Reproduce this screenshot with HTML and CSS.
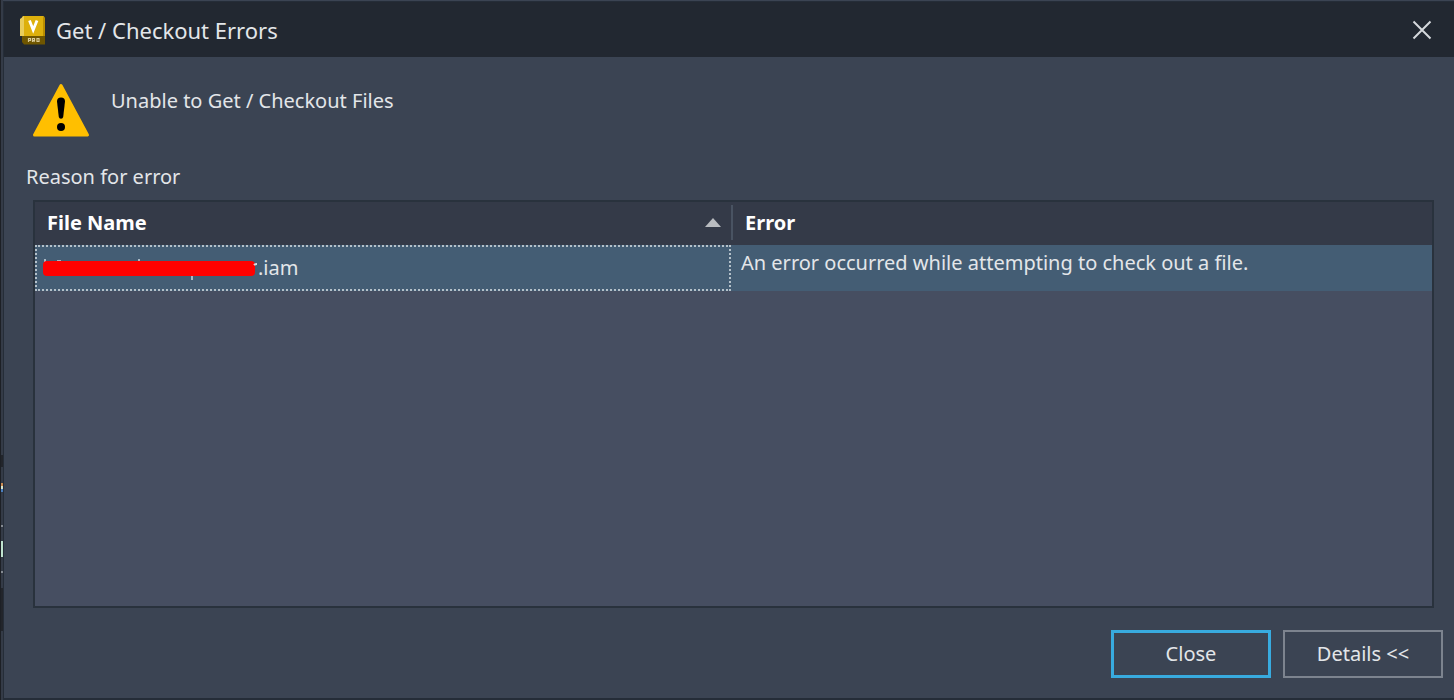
FILE: index.html
```html
<!DOCTYPE html>
<html lang="en">
<head>
<meta charset="utf-8">
<title>Get / Checkout Errors</title>
<link rel="stylesheet" href="styles.css">
</head>
<body>
<div class="backdrop" aria-hidden="true">
  <svg width="3" height="260" viewBox="0 0 3 260">
    <path fill="#22252b" d="M0 15h3v12H0zM0 148h3v43H0z"/>
    <path fill="#c98a52" d="M0 43h2v3H0z"/><path fill="#d9e6cf" d="M0 46h2v3H0z"/><path fill="#4a7fc0" d="M0 49h2v3H0z"/>
    <path fill="#858b92" d="M0 85h2v2H0zM0 131h2v2H0z"/>
    <path fill="#bfe3cf" d="M0 101h2v16H0z"/>
  </svg>
</div>
<main class="dialog">
  <header class="titlebar">
    <svg class="app-icon" width="28" height="32" viewBox="0 0 28 32" aria-hidden="true">
      <path fill="#6f5600" d="M3 20h23v10.500H5L3 28z"/>
      <path fill="#ddb00c" d="M4 2h20q1.500 0 1.500 1.500V22H3V3z"/>
      <path fill="#e9cd5c" d="M1 5l4-3v20H1z"/>
      <path fill="#b98d00" d="M24 3l2 1v18h-2z"/>
      <path fill="none" stroke="#fff" stroke-width="2.800" d="M10.500 6.500l3.700 9.500L18 6.500"/>
      <path fill="none" stroke="#d8ca98" stroke-width="1.200" d="M9.500 28v-3.500h2v2h-2M13.500 28v-3.500h2v2h-2m1 0l1 1.500M18 24.500h2V27.500h-2z"/>
    </svg>
    <h1 class="title">Get / Checkout Errors</h1>
    <button class="dismiss" type="button" aria-label="Dismiss">
      <svg width="20" height="20" viewBox="0 0 20 20" aria-hidden="true"><path fill="none" stroke="#d6d9dc" stroke-width="2" d="M1.500 1.500l17 17M18.500 1.500l-17 17"/></svg>
    </button>
  </header>
  <section class="message">
    <svg class="warning" width="58" height="54" viewBox="0 0 58 54" aria-hidden="true">
      <path fill="#ffbf00" stroke="#ffbf00" stroke-width="3" stroke-linejoin="round" d="M29 2.500L55.500 52H2.500z"/>
      <path d="M25 18.500q0-4 4-4t4 4l-1.800 15.500q-.3 1.800-2.200 1.800t-2.200-1.800z"/>
      <circle cx="29" cy="44" r="4"/>
    </svg>
    <p class="message-text">Unable to Get / Checkout Files</p>
  </section>
  <h2 class="caption" id="reason">Reason for error</h2>
  <div class="grid">
    <table class="errors" aria-labelledby="reason">
      <colgroup><col class="name-column"><col></colgroup>
      <thead>
        <tr>
          <th scope="col"><div class="heading">File Name
            <svg width="16" height="9" viewBox="0 0 16 9" aria-hidden="true"><path fill="#b9bcc0" d="M8 0l8 9H0z"/></svg></div></th>
          <th scope="col"><div class="heading">Error</div></th>
        </tr>
      </thead>
      <tbody>
        <tr>
          <td class="focused"><div class="file">
            <svg width="215" height="28" viewBox="0 0 215 28" aria-hidden="true">
              <path fill="none" stroke="#a9b8c4" stroke-width="2" d="M2 5v5M14 7h4M96 5v5M149 20v6"/>
              <rect y="7" width="212" height="15" rx="4" fill="#f00"/>
              <path fill="none" stroke="#d5dce2" stroke-width="2" d="M211 11q1-1 3-1"/>
            </svg><span>.iam</span></div></td>
          <td class="reason">An error occurred while attempting to check out a file.</td>
        </tr>
      </tbody>
    </table>
  </div>
  <footer class="actions">
    <button class="action primary" type="button">Close</button>
    <button class="action" type="button">Details &lt;&lt;</button>
  </footer>
</main>
</body>
</html>
```
FILE: styles.css
```css
* { box-sizing: border-box; }

body {
  margin: 0;
  min-height: 100vh;
  display: flex;
  background: #3b4453;
  color: #e3e6e9;
  font: 20px/28px "Noto Sans", "Open Sans", sans-serif;
}

h1, h2, p { margin: 0; font-weight: 400; }
svg { display: block; flex: none; }
button { font: inherit; color: inherit; cursor: pointer; }

.backdrop {
  width: 3px;
  padding-top: 440px;
  background: #343b47;
  border-left: 1px solid #1d2025;
  overflow: hidden;
}

.dialog {
  flex: 1;
  display: flex;
  flex-direction: column;
  margin-top: 1px;
  border: solid #252d38;
  border-width: 1px 0 2px 1px;
}

.titlebar {
  display: flex;
  align-items: center;
  height: 55px;
  padding: 0 22px 0 15px;
  background: #222831;
}

.title { margin-left: 9px; font-size: 22px; }

.dismiss {
  margin-left: auto;
  padding: 0;
  border: 0;
  background: none;
}

.message {
  display: flex;
  gap: 21px;
  padding: 26px 28px 0;
}

.message-text { padding-top: 4px; }

.caption { padding: 26px 22px 9px; font-size: 20px; }

.grid {
  flex: 1;
  margin: 0 20px 0 29px;
  border: 2px solid #29323d;
  background: #464e61;
}

.errors {
  width: 100%;
  table-layout: fixed;
  border-collapse: collapse;
}

.name-column { width: 696px; }

.errors th {
  height: 43px;
  padding: 3px 0 5px;
  background: #343a48;
  color: #fff;
  text-align: left;
}

.errors th + th .heading { border-left: 2px solid #495362; padding-left: 12px; }

.heading {
  display: flex;
  align-items: center;
  justify-content: space-between;
  height: 35px;
  padding: 0 10px 0 12px;
}

.errors td {
  height: 46px;
  padding: 0 10px;
  background: #445d74;
}

.errors .focused {
  padding: 0 8px;
  outline: 2px dotted #b5c1ca;
  outline-offset: -2px;
}

.file { display: flex; align-items: center; }
.errors .reason { padding-top: 4px; vertical-align: top; }

.actions {
  display: flex;
  justify-content: flex-end;
  gap: 12px;
  padding: 22px 11px 20px;
}

.action {
  width: 160px;
  height: 48px;
  padding: 0;
  border: 2px solid #7d848f;
  background: #3b4453;
}

.primary { border: 3px solid #38abdf; }
```
